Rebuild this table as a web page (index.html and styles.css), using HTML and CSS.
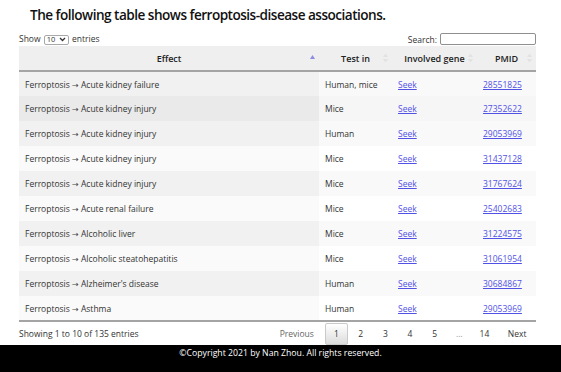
FILE: index.html
```html
<!DOCTYPE html>
<html>
<head>
<meta charset="utf-8">
<link rel="stylesheet" href="styles.css">
</head>
<body>
<div class="page">
  <h2 class="title">The following table shows ferroptosis-disease associations.</h2>
  <div class="controls">
    <label class="length">Show <span class="select">10 <svg width="7" height="5" viewBox="0 0 7 5"><path d="M1 1 L3.5 3.5 L6 1" fill="none" stroke="#333" stroke-width="1.3"/></svg></span> entries</label>
    <label class="search">Search: <span class="input"></span></label>
  </div>
  <table class="dt">
    <colgroup><col class="c1"><col class="c2"><col class="c3"><col class="c4"></colgroup>
    <thead>
      <tr>
        <th class="asc">Effect<span class="sort"><svg width="5" height="4" viewBox="0 0 5 4"><path d="M2.5 0 L5 4 L0 4Z" fill="#8c8ce0"/></svg></span></th>
        <th>Test in<span class="sort"><svg width="5" height="9" viewBox="0 0 5 9"><path d="M2.5 0 L5 3.5 L0 3.5Z M2.5 9 L5 5.5 L0 5.5Z" fill="#e2e2e2"/></svg></span></th>
        <th>Involved gene<span class="sort"><svg width="5" height="9" viewBox="0 0 5 9"><path d="M2.5 0 L5 3.5 L0 3.5Z M2.5 9 L5 5.5 L0 5.5Z" fill="#e2e2e2"/></svg></span></th>
        <th>PMID<span class="sort"><svg width="5" height="9" viewBox="0 0 5 9"><path d="M2.5 0 L5 3.5 L0 3.5Z M2.5 9 L5 5.5 L0 5.5Z" fill="#e2e2e2"/></svg></span></th>
      </tr>
    </thead>
    <tbody>
      <tr class="odd"><td class="s1">Ferroptosis <span class="arr">→</span> Acute kidney failure</td><td>Human, mice</td><td><a href="#">Seek</a></td><td><a href="#">28551825</a></td></tr>
      <tr class="even hover"><td class="s1">Ferroptosis <span class="arr">→</span> Acute kidney injury</td><td>Mice</td><td><a href="#">Seek</a></td><td><a href="#">27352622</a></td></tr>
      <tr class="odd"><td class="s1">Ferroptosis <span class="arr">→</span> Acute kidney injury</td><td>Human</td><td><a href="#">Seek</a></td><td><a href="#">29053969</a></td></tr>
      <tr class="even"><td class="s1">Ferroptosis <span class="arr">→</span> Acute kidney injury</td><td>Mice</td><td><a href="#">Seek</a></td><td><a href="#">31437128</a></td></tr>
      <tr class="odd"><td class="s1">Ferroptosis <span class="arr">→</span> Acute kidney injury</td><td>Mice</td><td><a href="#">Seek</a></td><td><a href="#">31767624</a></td></tr>
      <tr class="even"><td class="s1">Ferroptosis <span class="arr">→</span> Acute renal failure</td><td>Mice</td><td><a href="#">Seek</a></td><td><a href="#">25402683</a></td></tr>
      <tr class="odd"><td class="s1">Ferroptosis <span class="arr">→</span> Alcoholic liver</td><td>Mice</td><td><a href="#">Seek</a></td><td><a href="#">31224575</a></td></tr>
      <tr class="even"><td class="s1">Ferroptosis <span class="arr">→</span> Alcoholic steatohepatitis</td><td>Mice</td><td><a href="#">Seek</a></td><td><a href="#">31061954</a></td></tr>
      <tr class="odd"><td class="s1">Ferroptosis <span class="arr">→</span> Alzheimer's disease</td><td>Human</td><td><a href="#">Seek</a></td><td><a href="#">30684867</a></td></tr>
      <tr class="even"><td class="s1">Ferroptosis <span class="arr">→</span> Asthma</td><td>Human</td><td><a href="#">Seek</a></td><td><a href="#">29053969</a></td></tr>
    </tbody>
  </table>
  <div class="bottom">
    <div class="info">Showing 1 to 10 of 135 entries</div>
    <div class="paginate">
      <span class="pb disabled">Previous</span>
      <span class="pb current">1</span>
      <span class="pb">2</span>
      <span class="pb">3</span>
      <span class="pb">4</span>
      <span class="pb">5</span>
      <span class="pb ell">…</span>
      <span class="pb">14</span>
      <span class="pb next">Next</span>
    </div>
  </div>
</div>
<footer class="footer">©Copyright 2021 by Nan Zhou. All rights reserved.</footer>
</body>
</html>
```

FILE: styles.css
```css
html, body {
  margin: 0;
  padding: 0;
  background: #fff;
  font-family: "Open Sans", "Liberation Sans", sans-serif;
  color: #333;
}
.page {
  padding: 0 25px 0 19px;
}
.title {
  margin: 0;
  padding: 5px 0 0 11px;
  height: 32px;
  box-sizing: border-box;
  font-size: 13.6px;
  letter-spacing: -0.52px;
  font-weight: 600;
  color: #111;
  line-height: 20px;
}
.controls {
  display: flex;
  justify-content: space-between;
  align-items: center;
  height: 14px;
  font-size: 8.5px;
  color: #333;
}
.select {
  display: inline-flex;
  align-items: center;
  justify-content: space-between;
  width: 25px;
  height: 10px;
  border: 1px solid #a9a9a9;
  border-radius: 2px;
  padding: 0 2px;
  font-size: 7.5px;
  line-height: 9px;
  vertical-align: middle;
  margin: 0 1px;
  box-sizing: border-box;
}
.search {
  display: flex;
  align-items: center;
  gap: 3px;
}
.input {
  display: inline-block;
  width: 94px;
  height: 10px;
  border: 1px solid #8f8f8f;
  border-radius: 2px;
  background: #fff;
}
.dt {
  width: 100%;
  border-collapse: collapse;
  table-layout: fixed;
  font-size: 8.5px;
}
.c1 { width: 300px; }
.c2 { width: 73px; }
.c3 { width: 85px; }
.c4 { width: 59px; }
.dt thead th {
  position: relative;
  background: #efefef;
  height: 25px;
  padding: 0 4px;
  font-size: 9px;
  font-weight: 600;
  color: #222;
  text-align: center;
  white-space: nowrap;
  border-bottom: 2px solid #a4a4a4;
  box-sizing: border-box;
}
.sort {
  position: absolute;
  right: 4px;
  top: 50%;
  transform: translateY(-50%);
  line-height: 0;
}
.asc .sort { right: 4px; top: 9px; transform: none; }
.dt tbody td {
  height: 25px;
  padding: 0 6px;
  box-sizing: border-box;
  color: #333;
  white-space: nowrap;
}
.arr {
  font-family: "DejaVu Sans", sans-serif;
  font-size: 8px;
  color: #444;
}
.dt tbody tr.odd td { background: #f9f9f9; }
.dt tbody tr.odd td.s1 { background: #f1f1f1; }
.dt tbody tr.even td { background: #fff; }
.dt tbody tr.even td.s1 { background: #fafafa; }
.dt tbody tr.hover td { background: #f6f6f6; }
.dt tbody tr.hover td.s1 { background: #eaeaea; }
.dt tbody tr:last-child td { border-bottom: 2px solid #a4a4a4; }
.dt a { color: #5151e6; }
.bottom {
  display: flex;
  justify-content: space-between;
  align-items: center;
  height: 23px;
  font-size: 8.5px;
}
.paginate {
  display: flex;
  align-items: center;
  padding-right: 2px;
}
.pb {
  display: inline-block;
  min-width: 9px;
  padding: 0 6.5px;
  margin-left: 0.7px;
  line-height: 20px;
  text-align: center;
  color: #333;
  border: 1px solid transparent;
  border-radius: 2px;
}
.pb.disabled { color: #666; margin-right: 3px; }
.pb.next { margin-left: 3.5px; }
.pb.current {
  border-color: #cacaca;
  background: linear-gradient(#fff, #dcdcdc);
  min-width: 8px;
}
.pb.ell { color: #999; }
.footer {
  background: #000;
  color: #fff;
  text-align: center;
  font-size: 8.7px;
  height: 28px;
  line-height: 17px;
}
```
